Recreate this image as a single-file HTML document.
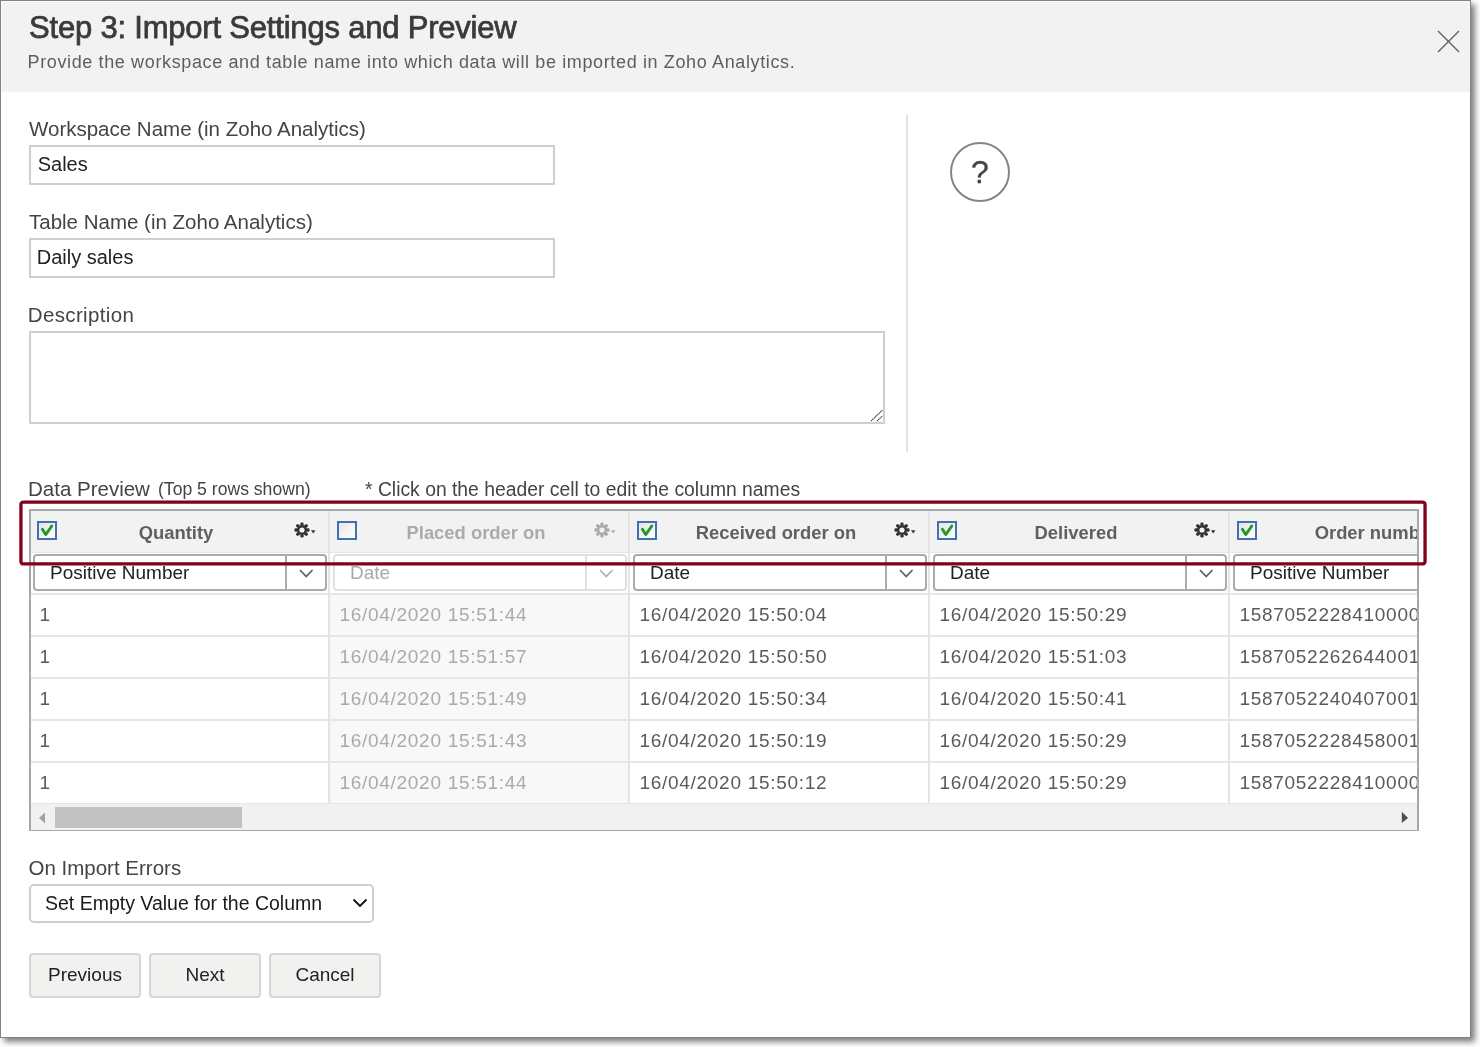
<!DOCTYPE html>
<html>
<head>
<meta charset="utf-8">
<style>
html,body{margin:0;padding:0;background:#fff;width:1480px;height:1047px;overflow:hidden;}
body{font-family:"Liberation Sans",sans-serif;position:relative;-webkit-font-smoothing:antialiased;will-change:transform;}
.a{position:absolute;white-space:nowrap;line-height:1;}
#dlg{position:absolute;left:0;top:0;width:1469px;height:1036px;border:1px solid #818181;background:#fff;box-shadow:4px 4px 6px rgba(0,0,0,0.5);}
#hdr{position:absolute;left:1px;top:1px;width:1469px;height:91px;background:#f2f2f2;border-top:1px solid #fbfbfb;border-left:1px solid #fafafa;border-right:1px solid #f9f9f9;box-sizing:border-box;}
.lbl{color:#444;font-size:20.5px;}
.inp{position:absolute;border:2px solid #cfcfcf;background:#fff;box-sizing:border-box;}
.inptxt{color:#222;font-size:20px;}
.hd{font-size:18.4px;font-weight:bold;}
.cb{width:20px;height:19px;box-sizing:border-box;border:2px solid #4270b0;background:linear-gradient(135deg,#e6e6e4,#ffffff);}
.dd{box-sizing:border-box;border:2px solid #aaa;border-radius:4px;background:transparent;}
.ty{font-size:19px;}
.dt{font-size:19px;}
.num{letter-spacing:0.72px;}
.btn{position:absolute;box-sizing:border-box;border:2px solid #d6d6d6;border-radius:4px;background:#f1f1f0;}
.bt{font-size:19px;color:#222;}
</style>
</head>
<body>
<div id="dlg"></div>
<div id="hdr"></div>
<div class="a" style="left:29px;top:12px;font-size:31px;color:#3a3a3a;letter-spacing:-0.2px;-webkit-text-stroke:0.75px #3a3a3a;">Step 3: Import Settings and Preview</div>
<div class="a" style="left:27.5px;top:53px;font-size:18px;color:#5e5e5e;letter-spacing:0.63px;">Provide the workspace and table name into which data will be imported in Zoho Analytics.</div>
<svg class="a" style="left:1436px;top:29px" width="26" height="26" viewBox="0 0 26 26"><path d="M2 2 L23 23 M23 2 L2 23" stroke="#5c5c5c" stroke-width="1.25" fill="none"/></svg>

<div class="a lbl" style="left:29px;top:119px;">Workspace Name (in Zoho Analytics)</div>
<div class="inp" style="left:29px;top:145px;width:526px;height:40px;"></div>
<div class="a inptxt" style="left:37.7px;top:154px;">Sales</div>

<div class="a lbl" style="left:29px;top:212px;">Table Name (in Zoho Analytics)</div>
<div class="inp" style="left:29px;top:238px;width:526px;height:40px;"></div>
<div class="a inptxt" style="left:36.7px;top:247px;">Daily sales</div>

<div class="a lbl" style="left:27.8px;top:305px;letter-spacing:0.35px;">Description</div>
<div class="inp" style="left:29px;top:331px;width:856px;height:93px;"></div>
<svg class="a" style="left:868px;top:407px" width="16" height="16" viewBox="0 0 16 16"><path d="M3 14 L14.5 3 M9 14 L14.5 8.8" stroke="#3a3a3a" stroke-width="1.1" fill="none" stroke-dasharray="1.3 0.5"/></svg>

<div class="a" style="left:906px;top:115px;width:2px;height:337px;background:#e3e3e3;"></div>
<div class="a" style="left:950px;top:142px;width:60px;height:60px;box-sizing:border-box;border:2px solid #858585;border-radius:50%;"></div>
<div class="a" style="left:950px;top:156px;width:60px;text-align:center;font-size:32px;color:#444;-webkit-text-stroke:0.35px #444;">?</div>

<div class="a" style="left:28px;top:479px;font-size:20.5px;color:#444;">Data Preview</div>
<div class="a" style="left:158px;top:481px;font-size:17.6px;color:#444;">(Top 5 rows shown)</div>
<div class="a" style="left:365px;top:480px;font-size:19.33px;color:#444;">* Click on the header cell to edit the column names</div>

<div id="tbl" style="position:absolute;left:29px;top:509px;width:1390px;height:322px;overflow:hidden;">
<div class="a" style="left:0px;top:0;width:300px;height:43px;background:#f2f2f2;"></div>
<div class="a" style="left:0px;top:44px;width:300px;height:41px;background:#fff;"></div>
<div class="a" style="left:0px;top:85px;width:300px;height:210px;background:#fff;"></div>
<div class="a hd" style="left:-3px;top:15px;width:300px;text-align:center;color:#606060;">Quantity</div>
<div class="a cb" style="left:8px;top:12px;"></div><svg class="a" style="left:8px;top:12px" width="20" height="19" viewBox="0 0 20 19"><path d="M5.4 8.3 L8.7 13.6 L14.8 5.0" stroke="#20992a" stroke-width="2.9" fill="none" stroke-linecap="round" stroke-linejoin="round"/></svg>
<svg class="a" style="left:262.5px;top:13px" width="26" height="16" viewBox="-10 -8 26 16"><g fill="#333333"><circle r="4.7"/><rect x="-1.65" y="-7.6" width="3.3" height="4.2" rx="1.3" transform="rotate(0)"/><rect x="-1.65" y="-7.6" width="3.3" height="4.2" rx="1.3" transform="rotate(45)"/><rect x="-1.65" y="-7.6" width="3.3" height="4.2" rx="1.3" transform="rotate(90)"/><rect x="-1.65" y="-7.6" width="3.3" height="4.2" rx="1.3" transform="rotate(135)"/><rect x="-1.65" y="-7.6" width="3.3" height="4.2" rx="1.3" transform="rotate(180)"/><rect x="-1.65" y="-7.6" width="3.3" height="4.2" rx="1.3" transform="rotate(225)"/><rect x="-1.65" y="-7.6" width="3.3" height="4.2" rx="1.3" transform="rotate(270)"/><rect x="-1.65" y="-7.6" width="3.3" height="4.2" rx="1.3" transform="rotate(315)"/><circle r="2.6" fill="#f2f2f2"/><path d="M9.0 0.3 L13.4 0.3 L11.2 3.4 Z"/></g></svg>
<div class="a dd" style="left:4px;top:45px;width:294px;height:36.5px;border-color:#ababab;"></div>
<div class="a" style="left:256px;top:46px;width:1.5px;height:35px;background:#ababab;"></div>
<svg class="a" style="left:268.75px;top:58.75px" width="16.5" height="10.5" viewBox="0 0 16.5 10.5"><path d="M2 2 L8.25 8.5 L14.5 2" stroke="#606060" stroke-width="1.8" fill="none"/></svg>
<div class="a ty" style="left:21px;top:54px;color:#222;">Positive Number</div>
<div class="a dt" style="left:10.4px;top:96px;color:#5a5a5a;">1</div>
<div class="a dt" style="left:10.4px;top:138px;color:#5a5a5a;">1</div>
<div class="a dt" style="left:10.4px;top:180px;color:#5a5a5a;">1</div>
<div class="a dt" style="left:10.4px;top:222px;color:#5a5a5a;">1</div>
<div class="a dt" style="left:10.4px;top:264px;color:#5a5a5a;">1</div>
<div class="a" style="left:300px;top:0;width:300px;height:43px;background:#f2f2f2;"></div>
<div class="a" style="left:300px;top:44px;width:300px;height:41px;background:#fff;"></div>
<div class="a" style="left:300px;top:85px;width:300px;height:210px;background:#f8f8f8;"></div>
<div class="a hd" style="left:297px;top:15px;width:300px;text-align:center;color:#ababab;">Placed order on</div>
<div class="a cb" style="left:308px;top:12px;"></div>
<svg class="a" style="left:562.5px;top:13px" width="26" height="16" viewBox="-10 -8 26 16"><g fill="#aaaaaa"><circle r="4.7"/><rect x="-1.65" y="-7.6" width="3.3" height="4.2" rx="1.3" transform="rotate(0)"/><rect x="-1.65" y="-7.6" width="3.3" height="4.2" rx="1.3" transform="rotate(45)"/><rect x="-1.65" y="-7.6" width="3.3" height="4.2" rx="1.3" transform="rotate(90)"/><rect x="-1.65" y="-7.6" width="3.3" height="4.2" rx="1.3" transform="rotate(135)"/><rect x="-1.65" y="-7.6" width="3.3" height="4.2" rx="1.3" transform="rotate(180)"/><rect x="-1.65" y="-7.6" width="3.3" height="4.2" rx="1.3" transform="rotate(225)"/><rect x="-1.65" y="-7.6" width="3.3" height="4.2" rx="1.3" transform="rotate(270)"/><rect x="-1.65" y="-7.6" width="3.3" height="4.2" rx="1.3" transform="rotate(315)"/><circle r="2.6" fill="#f2f2f2"/><path d="M9.0 0.3 L13.4 0.3 L11.2 3.4 Z"/></g></svg>
<div class="a dd" style="left:304px;top:45px;width:294px;height:36.5px;border-color:#e0e0e0;"></div>
<div class="a" style="left:556px;top:46px;width:1.5px;height:35px;background:#e0e0e0;"></div>
<svg class="a" style="left:568.75px;top:58.75px" width="16.5" height="10.5" viewBox="0 0 16.5 10.5"><path d="M2 2 L8.25 8.5 L14.5 2" stroke="#b0b0b0" stroke-width="1.8" fill="none"/></svg>
<div class="a ty" style="left:321px;top:54px;color:#aaaaaa;">Date</div>
<div class="a dt num" style="left:310.4px;top:96px;color:#aaaaaa;">16/04/2020 15:51:44</div>
<div class="a dt num" style="left:310.4px;top:138px;color:#aaaaaa;">16/04/2020 15:51:57</div>
<div class="a dt num" style="left:310.4px;top:180px;color:#aaaaaa;">16/04/2020 15:51:49</div>
<div class="a dt num" style="left:310.4px;top:222px;color:#aaaaaa;">16/04/2020 15:51:43</div>
<div class="a dt num" style="left:310.4px;top:264px;color:#aaaaaa;">16/04/2020 15:51:44</div>
<div class="a" style="left:600px;top:0;width:300px;height:43px;background:#f2f2f2;"></div>
<div class="a" style="left:600px;top:44px;width:300px;height:41px;background:#fff;"></div>
<div class="a" style="left:600px;top:85px;width:300px;height:210px;background:#fff;"></div>
<div class="a hd" style="left:597px;top:15px;width:300px;text-align:center;color:#606060;">Received order on</div>
<div class="a cb" style="left:608px;top:12px;"></div><svg class="a" style="left:608px;top:12px" width="20" height="19" viewBox="0 0 20 19"><path d="M5.4 8.3 L8.7 13.6 L14.8 5.0" stroke="#20992a" stroke-width="2.9" fill="none" stroke-linecap="round" stroke-linejoin="round"/></svg>
<svg class="a" style="left:862.5px;top:13px" width="26" height="16" viewBox="-10 -8 26 16"><g fill="#333333"><circle r="4.7"/><rect x="-1.65" y="-7.6" width="3.3" height="4.2" rx="1.3" transform="rotate(0)"/><rect x="-1.65" y="-7.6" width="3.3" height="4.2" rx="1.3" transform="rotate(45)"/><rect x="-1.65" y="-7.6" width="3.3" height="4.2" rx="1.3" transform="rotate(90)"/><rect x="-1.65" y="-7.6" width="3.3" height="4.2" rx="1.3" transform="rotate(135)"/><rect x="-1.65" y="-7.6" width="3.3" height="4.2" rx="1.3" transform="rotate(180)"/><rect x="-1.65" y="-7.6" width="3.3" height="4.2" rx="1.3" transform="rotate(225)"/><rect x="-1.65" y="-7.6" width="3.3" height="4.2" rx="1.3" transform="rotate(270)"/><rect x="-1.65" y="-7.6" width="3.3" height="4.2" rx="1.3" transform="rotate(315)"/><circle r="2.6" fill="#f2f2f2"/><path d="M9.0 0.3 L13.4 0.3 L11.2 3.4 Z"/></g></svg>
<div class="a dd" style="left:604px;top:45px;width:294px;height:36.5px;border-color:#ababab;"></div>
<div class="a" style="left:856px;top:46px;width:1.5px;height:35px;background:#ababab;"></div>
<svg class="a" style="left:868.75px;top:58.75px" width="16.5" height="10.5" viewBox="0 0 16.5 10.5"><path d="M2 2 L8.25 8.5 L14.5 2" stroke="#606060" stroke-width="1.8" fill="none"/></svg>
<div class="a ty" style="left:621px;top:54px;color:#222;">Date</div>
<div class="a dt num" style="left:610.4px;top:96px;color:#5a5a5a;">16/04/2020 15:50:04</div>
<div class="a dt num" style="left:610.4px;top:138px;color:#5a5a5a;">16/04/2020 15:50:50</div>
<div class="a dt num" style="left:610.4px;top:180px;color:#5a5a5a;">16/04/2020 15:50:34</div>
<div class="a dt num" style="left:610.4px;top:222px;color:#5a5a5a;">16/04/2020 15:50:19</div>
<div class="a dt num" style="left:610.4px;top:264px;color:#5a5a5a;">16/04/2020 15:50:12</div>
<div class="a" style="left:900px;top:0;width:300px;height:43px;background:#f2f2f2;"></div>
<div class="a" style="left:900px;top:44px;width:300px;height:41px;background:#fff;"></div>
<div class="a" style="left:900px;top:85px;width:300px;height:210px;background:#fff;"></div>
<div class="a hd" style="left:897px;top:15px;width:300px;text-align:center;color:#606060;">Delivered</div>
<div class="a cb" style="left:908px;top:12px;"></div><svg class="a" style="left:908px;top:12px" width="20" height="19" viewBox="0 0 20 19"><path d="M5.4 8.3 L8.7 13.6 L14.8 5.0" stroke="#20992a" stroke-width="2.9" fill="none" stroke-linecap="round" stroke-linejoin="round"/></svg>
<svg class="a" style="left:1162.5px;top:13px" width="26" height="16" viewBox="-10 -8 26 16"><g fill="#333333"><circle r="4.7"/><rect x="-1.65" y="-7.6" width="3.3" height="4.2" rx="1.3" transform="rotate(0)"/><rect x="-1.65" y="-7.6" width="3.3" height="4.2" rx="1.3" transform="rotate(45)"/><rect x="-1.65" y="-7.6" width="3.3" height="4.2" rx="1.3" transform="rotate(90)"/><rect x="-1.65" y="-7.6" width="3.3" height="4.2" rx="1.3" transform="rotate(135)"/><rect x="-1.65" y="-7.6" width="3.3" height="4.2" rx="1.3" transform="rotate(180)"/><rect x="-1.65" y="-7.6" width="3.3" height="4.2" rx="1.3" transform="rotate(225)"/><rect x="-1.65" y="-7.6" width="3.3" height="4.2" rx="1.3" transform="rotate(270)"/><rect x="-1.65" y="-7.6" width="3.3" height="4.2" rx="1.3" transform="rotate(315)"/><circle r="2.6" fill="#f2f2f2"/><path d="M9.0 0.3 L13.4 0.3 L11.2 3.4 Z"/></g></svg>
<div class="a dd" style="left:904px;top:45px;width:294px;height:36.5px;border-color:#ababab;"></div>
<div class="a" style="left:1156px;top:46px;width:1.5px;height:35px;background:#ababab;"></div>
<svg class="a" style="left:1168.75px;top:58.75px" width="16.5" height="10.5" viewBox="0 0 16.5 10.5"><path d="M2 2 L8.25 8.5 L14.5 2" stroke="#606060" stroke-width="1.8" fill="none"/></svg>
<div class="a ty" style="left:921px;top:54px;color:#222;">Date</div>
<div class="a dt num" style="left:910.4px;top:96px;color:#5a5a5a;">16/04/2020 15:50:29</div>
<div class="a dt num" style="left:910.4px;top:138px;color:#5a5a5a;">16/04/2020 15:51:03</div>
<div class="a dt num" style="left:910.4px;top:180px;color:#5a5a5a;">16/04/2020 15:50:41</div>
<div class="a dt num" style="left:910.4px;top:222px;color:#5a5a5a;">16/04/2020 15:50:29</div>
<div class="a dt num" style="left:910.4px;top:264px;color:#5a5a5a;">16/04/2020 15:50:29</div>
<div class="a" style="left:1200px;top:0;width:300px;height:43px;background:#f2f2f2;"></div>
<div class="a" style="left:1200px;top:44px;width:300px;height:41px;background:#fff;"></div>
<div class="a" style="left:1200px;top:85px;width:300px;height:210px;background:#fff;"></div>
<div class="a hd" style="left:1197px;top:15px;width:300px;text-align:center;color:#606060;">Order number</div>
<div class="a cb" style="left:1208px;top:12px;"></div><svg class="a" style="left:1208px;top:12px" width="20" height="19" viewBox="0 0 20 19"><path d="M5.4 8.3 L8.7 13.6 L14.8 5.0" stroke="#20992a" stroke-width="2.9" fill="none" stroke-linecap="round" stroke-linejoin="round"/></svg>
<div class="a dd" style="left:1204px;top:45px;width:294px;height:36.5px;border-color:#ababab;"></div>
<div class="a" style="left:1456px;top:46px;width:1.5px;height:35px;background:#ababab;"></div>
<svg class="a" style="left:1468.75px;top:58.75px" width="16.5" height="10.5" viewBox="0 0 16.5 10.5"><path d="M2 2 L8.25 8.5 L14.5 2" stroke="#606060" stroke-width="1.8" fill="none"/></svg>
<div class="a ty" style="left:1221px;top:54px;color:#222;">Positive Number</div>
<div class="a dt num" style="left:1210.4px;top:96px;color:#5a5a5a;">15870522284100000</div>
<div class="a dt num" style="left:1210.4px;top:138px;color:#5a5a5a;">15870522626440011</div>
<div class="a dt num" style="left:1210.4px;top:180px;color:#5a5a5a;">15870522404070011</div>
<div class="a dt num" style="left:1210.4px;top:222px;color:#5a5a5a;">15870522284580011</div>
<div class="a dt num" style="left:1210.4px;top:264px;color:#5a5a5a;">15870522284100000</div>
<div class="a" style="left:0;top:43px;width:100%;height:1px;background:#e6e6e6;"></div>
<div class="a" style="left:0;top:84px;width:100%;height:2px;background:#e6e6e6;"></div>
<div class="a" style="left:0;top:126px;width:100%;height:2px;background:#e6e6e6;"></div>
<div class="a" style="left:0;top:168px;width:100%;height:2px;background:#e6e6e6;"></div>
<div class="a" style="left:0;top:210px;width:100%;height:2px;background:#e6e6e6;"></div>
<div class="a" style="left:0;top:252px;width:100%;height:2px;background:#e6e6e6;"></div>
<div class="a" style="left:0;top:294px;width:100%;height:2px;background:#e6e6e6;"></div>
<div class="a" style="left:299px;top:0;width:2px;height:295px;background:#e4e4e4;"></div>
<div class="a" style="left:599px;top:0;width:2px;height:295px;background:#e4e4e4;"></div>
<div class="a" style="left:899px;top:0;width:2px;height:295px;background:#e4e4e4;"></div>
<div class="a" style="left:1199px;top:0;width:2px;height:295px;background:#e4e4e4;"></div>
<div class="a" style="left:0;top:295px;width:100%;height:27px;background:#f1f1f1;"></div>
<div class="a" style="left:26px;top:298px;width:187px;height:21px;background:#c1c1c1;"></div>
<svg class="a" style="left:9px;top:302px" width="8" height="14" viewBox="0 0 8 14"><path d="M7 1.5 L1 7 L7 12.5 Z" fill="#a3a3a3"/></svg>
<svg class="a" style="left:1372px;top:302px" width="8" height="14" viewBox="0 0 8 14"><path d="M0.8 0.8 L7.1 6.9 L0.8 12.1 Z" fill="#505050"/></svg>
<div class="a" style="left:0;top:0;width:100%;height:100%;box-sizing:border-box;border:1px solid #a8a8a8;border-left-width:2px;border-top-width:2px;border-right-width:2px;"></div>
</div>

<svg class="a" style="left:0;top:480px" width="1480" height="100" viewBox="0 480 1480 100"><rect x="20.95" y="502.05" width="1404.1" height="61.9" rx="2.5" fill="none" stroke="#82001a" stroke-width="3.3"/></svg>

<div class="a lbl" style="left:28.5px;top:858px;">On Import Errors</div>
<div class="inp" style="left:29px;top:884px;width:345px;height:39px;border-radius:5px;"></div>
<div class="a" style="left:45px;top:894px;font-size:19.5px;color:#1a1a1a;">Set Empty Value for the Column</div>
<svg class="a" style="left:351px;top:897px" width="18" height="12" viewBox="0 0 18 12"><path d="M2.5 2.5 L9 9 L15.5 2.5" stroke="#111" stroke-width="1.8" fill="none"/></svg>

<div class="btn" style="left:29px;top:953px;width:112px;height:45px;"></div>
<div class="a bt" style="left:29px;top:965px;width:112px;text-align:center;">Previous</div>
<div class="btn" style="left:149px;top:953px;width:112px;height:45px;"></div>
<div class="a bt" style="left:149px;top:965px;width:112px;text-align:center;">Next</div>
<div class="btn" style="left:269px;top:953px;width:112px;height:45px;"></div>
<div class="a bt" style="left:269px;top:965px;width:112px;text-align:center;">Cancel</div>
</body>
</html>
